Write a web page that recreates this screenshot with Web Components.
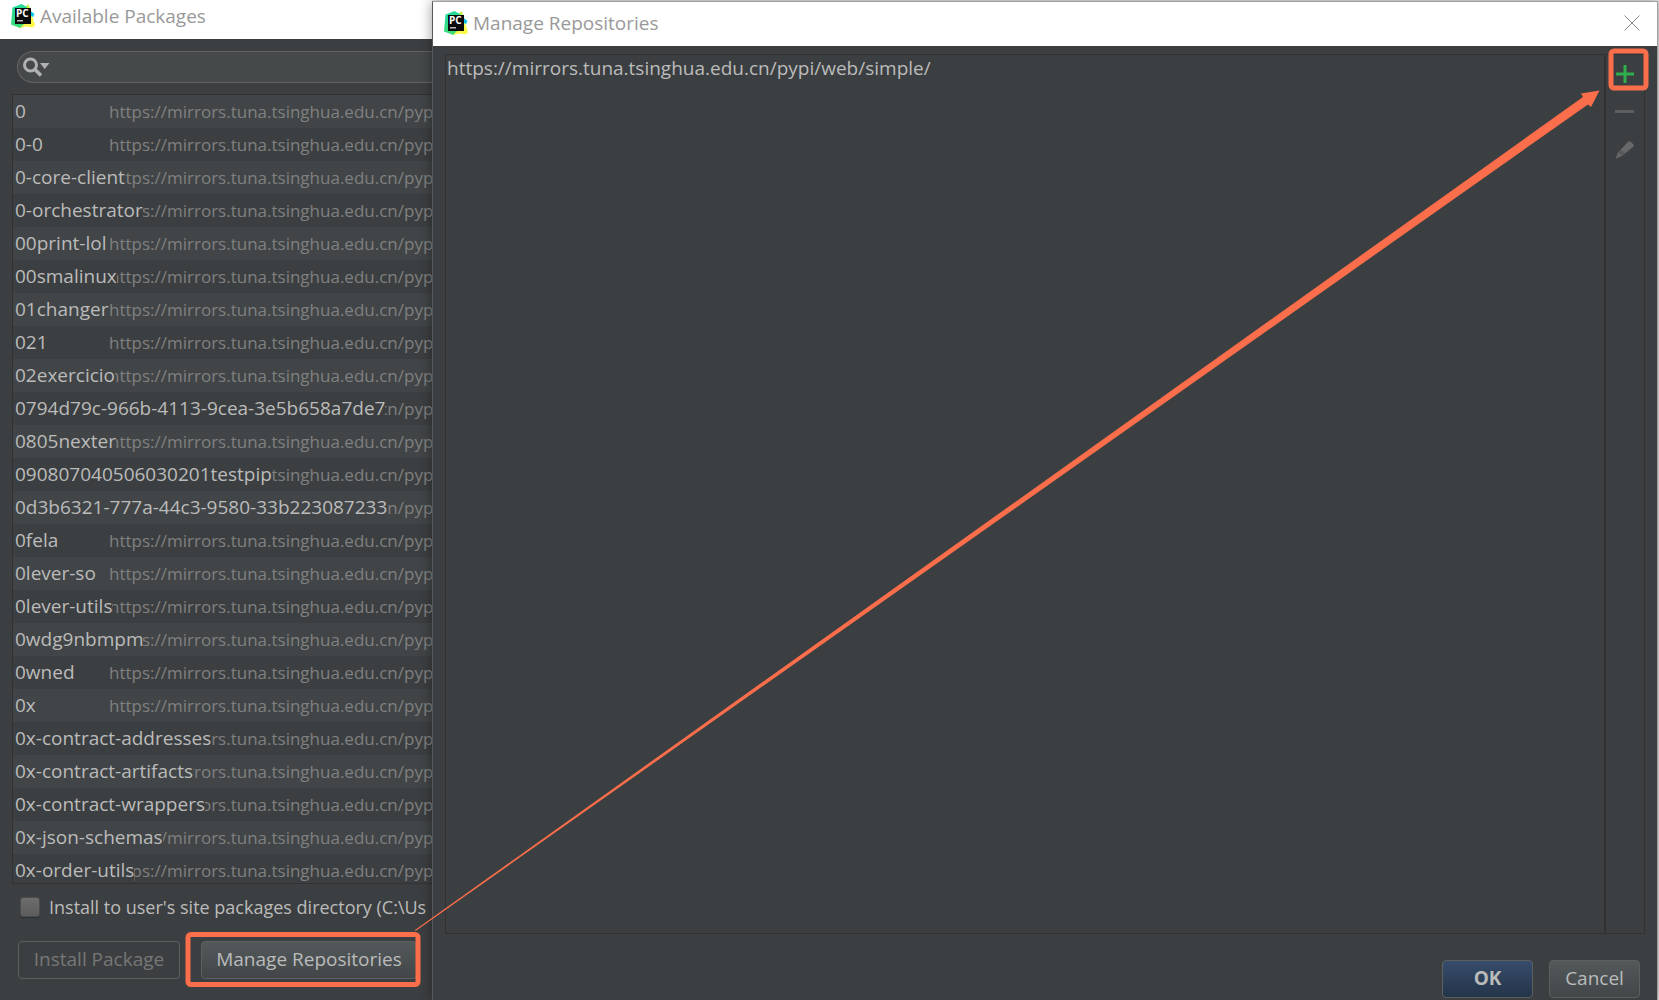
<!DOCTYPE html>
<html lang="en">
<head>
<meta charset="utf-8">
<title>Manage Repositories</title>
<style>
  html, body { height: 100%; margin: 0; }
  body {
    --panel: #3c3f41; --stripe: #414547; --line: #323232; --edge: #5e6060; --text: #bbbbbb; --dim: #808080; --mark: #fa6e4b;
    display: flex; position: relative; overflow: hidden; background: #ececec; color: var(--text);
    font-family: "Open Sans", "Noto Sans", sans-serif; font-size: 19px; line-height: 24px;
  }
</style>
</head>
<body>
<packages-window></packages-window>
<repositories-dialog></repositories-dialog>
<guide-arrow></guide-arrow>
<script>
const define = (name, html, setup) => {
  const tpl = document.createElement('template');
  tpl.innerHTML = html;
  customElements.define(name, class extends HTMLElement {
    constructor() {
      super();
      this.attachShadow({ mode: 'open' }).append(tpl.content.cloneNode(true));
    }
    connectedCallback() { if (setup) setup(this, this.shadowRoot); }
  });
};

define('app-logo', `
<style>:host{display:block;flex:none;width:24px;height:24px}svg{display:block}</style>
<svg width="24" height="24" viewBox="0 0 24 24" aria-hidden="true">
  <defs>
    <linearGradient id="g" x1="0" y1="0" x2="0.3" y2="1"><stop offset="0" stop-color="#1fdca0"/><stop offset="1" stop-color="#3ddc77"/></linearGradient>
    <linearGradient id="y" x1="0" y1="0" x2="0" y2="1"><stop offset="0" stop-color="#b6f04f"/><stop offset=".6" stop-color="#fcf84a"/></linearGradient>
  </defs>
  <path d="M12 5 17.500 0 20 6 21.500 13 24 21 22 23.500 15 22.500 9 24 5 20Z" fill="url(#y)"/>
  <path d="M19 6.500 23.500 10 22 13 20 12Z" fill="#07c3f2"/>
  <path d="M1.500 3.500 10.500 0 16 3 15 18 9 24 0 20.500Z" fill="url(#g)"/>
  <rect x="4" y="4" width="16" height="16" fill="#0b0b0b"/>
  <rect x="6" y="16" width="6" height="1.500" fill="#bbb"/>
  <text x="5" y="12.500" font-family="Open Sans, sans-serif" font-weight="700" font-size="10" fill="#fff">PC</text>
</svg>`);

define('title-bar', `
<style>
  :host{display:flex;align-items:center;gap:5px;flex:none;box-sizing:border-box;background:#fff;color:#999}
  h1{margin:0;flex:1;font:inherit;white-space:nowrap}
</style>
<app-logo></app-logo><h1><slot></slot></h1><slot name="end"></slot>`);

define('ide-button', `
<style>
  :host{display:block;flex:none}
  button{width:100%;height:38px;padding:0 0 2px;box-sizing:border-box;border:1px solid var(--edge);border-radius:4px;
    background:linear-gradient(#53595b,#424648);color:var(--text);font:inherit;white-space:nowrap}
  :host([primary]) button{background:linear-gradient(#374d6c,#243449);font-weight:700}
  button:disabled{background:none;color:#777}
</style>
<button type="button"><slot></slot></button>`, (el, root) => {
  root.querySelector('button').disabled = el.hasAttribute('disabled');
});

define('search-field', `
<style>
  :host{display:flex;align-items:center;box-sizing:border-box;height:32px;padding-left:5px;
    border:1px solid #646464;border-right:0;border-radius:16px 0 0 16px;background:#45494a}
  svg{flex:none}
  input{flex:1;min-width:0;border:0;outline:0;background:none;color:inherit;font:inherit}
</style>
<svg width="28" height="20" viewBox="0 0 28 20" aria-hidden="true">
  <circle cx="7.500" cy="8" r="6" fill="none" stroke="#afb1b3" stroke-width="3"/>
  <path d="M11.500 12 18 18.500" stroke="#afb1b3" stroke-width="3.500"/>
  <path d="M17 6H26.500L21.700 12Z" fill="#afb1b3"/>
</svg>
<input type="text" aria-label="Search packages">`);

define('package-row', `
<style>
  :host{display:grid;align-items:baseline;height:33px;padding:4px 0 0 2px;box-sizing:border-box;background:var(--panel)}
  :host(:nth-child(odd)){background:var(--stripe)}
  span{grid-area:1/1;white-space:nowrap}
  .url{padding-left:94px;color:var(--dim);font-size:17px}
  .name{justify-self:start;background:var(--panel)}
  :host(:nth-child(odd)) .name{background:var(--stripe)}
</style>
<span class="url"><slot name="url"></slot></span><span class="name"><slot></slot></span>`);

define('package-list', `
<style>
  :host{display:block;overflow:hidden;border:1px solid var(--line);border-right:0}
</style>
<div role="list"></div>`, (el, root) => {
  const list = root.querySelector('div');
  const names = ['0','0-0','0-core-client','0-orchestrator','00print-lol','00smalinux','01changer','021','02exercicio',
    '0794d79c-966b-4113-9cea-3e5b658a7de7','0805nexter','090807040506030201testpip','0d3b6321-777a-44c3-9580-33b223087233',
    '0fela','0lever-so','0lever-utils','0wdg9nbmpm','0wned','0x','0x-contract-addresses','0x-contract-artifacts',
    '0x-contract-wrappers','0x-json-schemas','0x-order-utils'];
  for (const name of names) {
    const row = document.createElement('package-row');
    row.setAttribute('role', 'listitem');
    row.innerHTML = '<span slot="url">https://mirrors.tuna.tsinghua.edu.cn/pyp</span>' + name;
    list.append(row);
  }
});

define('packages-window', `
<style>
  :host{display:flex;flex-direction:column;flex:none;width:432px;overflow:hidden;background:var(--panel)}
  title-bar{height:39px;padding:0 0 7px 11px}
  search-field{flex:none;margin:12px 0 0 17px}
  package-list{flex:1;min-height:0;margin:11px 0 0 12px}
  label{display:flex;align-items:center;gap:9px;margin:11px 0 0 20px;height:24px;font-size:18px;white-space:nowrap}
  input{appearance:none;flex:none;width:20px;height:20px;margin:0;border:1px solid #4b4d4e;border-radius:3px;
    background:linear-gradient(#6c6c6c,#5c5c5c);box-shadow:0 1px 0 #2c2e2f}
  .actions{display:flex;gap:21px;padding:22px 0 21px 18px}
  .install{width:162px}.manage{width:216px}
</style>
<title-bar>Available Packages</title-bar>
<search-field></search-field>
<package-list></package-list>
<label><input type="checkbox">Install to user's site packages directory (C:\\Us</label>
<div class="actions">
  <ide-button class="install" disabled>Install Package</ide-button>
  <ide-button class="manage">Manage Repositories</ide-button>
</div>`);

define('repository-tools', `
<style>
  :host{display:flex;flex-direction:column;align-items:center;gap:14px;padding-top:7px;box-sizing:border-box}
  button{display:block;width:24px;height:24px;padding:0;border:0;background:none}
  svg{display:block}
</style>
<button type="button" aria-label="Add"><svg width="24" height="24"><path d="M3 12H21M12 3V21" stroke="#2fae4c" stroke-width="3"/></svg></button>
<button type="button" aria-label="Remove" disabled><svg width="24" height="24"><path d="M2 11.500H21" stroke="#5c5e5f" stroke-width="3"/></svg></button>
<button type="button" aria-label="Edit" disabled><svg width="24" height="24"><path d="M2.500 21 5 14.500 14.500 4.500 17 3 21 7 20 9 9.500 17.500Z" fill="#666869"/><path d="M5 14.500 9.500 17.500 12 15 7.500 12Z" fill="#555758"/></svg></button>`);

define('repositories-dialog', `
<style>
  :host{display:flex;flex-direction:column;flex:1;min-width:0;position:relative;margin:1px 1px 0 0;box-sizing:border-box;
    border:1px solid #565859;border-top-color:#a0a0a0;border-right-color:#a0a0a0;border-bottom:0;background:var(--panel);box-shadow:0 0 12px rgba(0,0,0,.4)}
  title-bar{height:44px;padding:0 16px 2px 11px}
  .close{width:18px;height:18px;padding:0;border:0;background:none}
  .close svg{display:block}
  .body{display:flex;flex:1;min-height:0;margin:8px 12px 0 12px;border:1px solid var(--line)}
  ul{flex:1;margin:0;padding:1px 0 0 1px;list-style:none;border-right:2px solid var(--line)}
  repository-tools{width:38px}
  footer{display:flex;justify-content:flex-end;gap:16px;padding:26px 17px 2px}
  ide-button{width:91px}
</style>
<title-bar>Manage Repositories<button slot="end" class="close" type="button" aria-label="Close"><svg width="18" height="18"><path d="M1.500 1.500 16.500 16.500M16.500 1.500 1.500 16.500" stroke="#888"/></svg></button></title-bar>
<div class="body">
  <ul><li>https://mirrors.tuna.tsinghua.edu.cn/pypi/web/simple/</li></ul>
  <repository-tools></repository-tools>
</div>
<footer><ide-button primary>OK</ide-button><ide-button>Cancel</ide-button></footer>`);

define('guide-arrow', `
<style>:host{position:absolute;inset:0;pointer-events:none}svg{display:block}</style>
<svg width="1659" height="1000" aria-hidden="true">
  <g fill="none" stroke="var(--mark)" stroke-width="5">
    <rect x="188" y="934.500" width="230" height="50" rx="3"/>
    <rect x="1611" y="51" width="35" height="37" rx="3"/>
  </g>
  <path d="M415 930 1583 97 1581 93.500 1599.500 90.500 1591 107 1588 104.500 415.500 931Z" fill="var(--mark)"/>
</svg>`);
</script>
</body>
</html>
